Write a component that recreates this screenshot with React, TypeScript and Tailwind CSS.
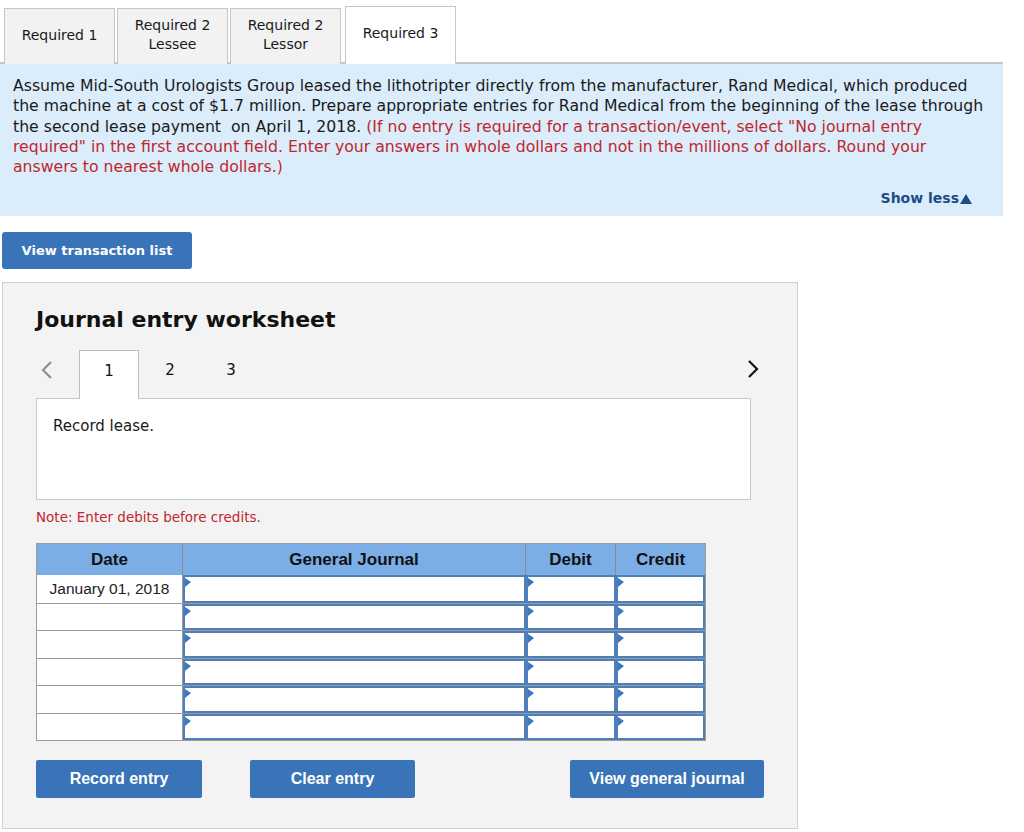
import React from "react";

const verdana = "font-['Verdana','DejaVu_Sans',sans-serif]";
const narrow = "font-['Liberation_Sans_Narrow','Liberation_Sans',sans-serif]";

const topTabs = [
  { label: ["Required 1"], active: false },
  { label: ["Required 2", "Lessee"], active: false },
  { label: ["Required 2", "Lessor"], active: false },
  { label: ["Required 3"], active: true },
];

function TopTabs() {
  return (
    <div className="flex items-end gap-[2px] pl-[4px] pt-[6px] border-b-2 border-[#c6c6c6] w-[1003px]">
      {topTabs.map((t, i) => (
        <div
          key={i}
          className={
            "w-[111px] h-[56px] -mb-[2px] pb-[3px] flex flex-col items-center justify-center text-[14px] leading-[19px] text-[#1a1a1a] border border-[#c6c6c6] " +
            (t.active ? "bg-white border-b-white ml-[2px] h-[58px]" : "bg-[#f2f2f2] border-b-0")
          }
        >
          {t.label.map((l) => (
            <span key={l}>{l}</span>
          ))}
        </div>
      ))}
    </div>
  );
}

function InputCell({ w }: { w: string }) {
  return (
    <div className={"relative h-full border-2 border-[#4f7fba] bg-white " + w}>
      <svg width="6" height="9" viewBox="0 0 6 9" className="absolute left-0 top-[1px]">
        <path d="M0 0 L6 4 L0 9 Z" fill="#3a78c2" />
      </svg>
    </div>
  );
}

function JournalTable() {
  const rows = ["January 01, 2018", "", "", "", "", ""];
  return (
    <div className="w-[670px] border border-[#9b9b9b] bg-white">
      <div className={"flex h-[31px] bg-[#7badE6] text-[17px] font-bold text-[#111] " + narrow}>
        <div className="w-[146px] flex items-center justify-center border-r border-[#8a8a8a]">Date</div>
        <div className="w-[343px] flex items-center justify-center border-r border-[#8a8a8a]">General Journal</div>
        <div className="w-[90px] flex items-center justify-center border-r border-[#8a8a8a]">Debit</div>
        <div className="flex-1 flex items-center justify-center">Credit</div>
      </div>
      {rows.map((d, i) => (
        <div key={i} className={"flex h-[27.5px] " + (i > 0 ? "border-t border-[#9b9b9b]" : "")}>
          <div className={"w-[146px] flex items-center justify-center text-[15.5px] text-[#222] border-r border-[#9b9b9b] " + narrow}>
            {d}
          </div>
          <InputCell w="w-[343px]" />
          <InputCell w="w-[90px]" />
          <InputCell w="flex-1" />
        </div>
      ))}
    </div>
  );
}

export default function App() {
  return (
    <div className={"w-[1024px] h-[832px] bg-white " + verdana}>
      <TopTabs />
      <div className="w-[1003px] h-[152px] bg-[#dbedfb] px-[13px] pt-[12px] relative">
        <p className="text-[15.7px] leading-[20.3px] text-[#1a1a1a] whitespace-nowrap">
          Assume Mid-South Urologists Group leased the lithotripter directly from the manufacturer, Rand Medical, which produced
          <br />
          the machine at a cost of $1.7 million. Prepare appropriate entries for Rand Medical from the beginning of the lease through
          <br />
          the second lease payment&nbsp; on April 1, 2018.{" "}
          <span className="text-[#c0262d]">
            (If no entry is required for a transaction/event, select "No journal entry
            <br />
            required" in the first account field. Enter your answers in whole dollars and not in the millions of dollars. Round your
            <br />
            answers to nearest whole dollars.)
          </span>
        </p>
        <div className="absolute right-[31px] top-[124px] text-[14px] font-bold text-[#1e4c86] flex items-center">
          Show less
          <svg width="12" height="10" viewBox="0 0 12 10" className="ml-[1px]">
            <path d="M0 10 L6 0 L12 10 Z" fill="#1e4c86" />
          </svg>
        </div>
      </div>

      <div className="pl-[2px] pt-[16px]">
        <button className="w-[190px] h-[37px] rounded-[3px] bg-[#3973b8] text-white text-[13px] font-bold">
          View transaction list
        </button>
      </div>

      <div className="ml-[2px] mt-[13px] w-[796px] h-[547px] bg-[#f3f3f3] border border-[#d2d2d2] pl-[33px] pt-[24px]">
        <h2 className="text-[22px] font-bold text-[#111] leading-[26px]">Journal entry worksheet</h2>

        <div className="mt-[17px] w-[715px] flex items-end relative">
          <div className="w-[43px] h-[48px] flex items-center justify-start pl-[5px] pb-[8px]">
            <svg width="12" height="18" viewBox="0 0 12 18">
              <path d="M10 1 L2 9 L10 17" stroke="#8f8f8f" strokeWidth="2.2" fill="none" />
            </svg>
          </div>
          <div className="w-[60px] h-[49px] -mb-[1px] bg-white border border-[#bdbdbd] border-b-0 flex items-center justify-center pb-[8px] text-[15px] text-[#111] relative z-10">
            1
          </div>
          <div className="w-[62px] h-[48px] flex items-center justify-center pb-[8px] text-[15px] text-[#111]">2</div>
          <div className="w-[60px] h-[48px] flex items-center justify-center pb-[8px] text-[15px] text-[#111]">3</div>
          <div className="absolute right-[-8px] top-[10px]">
            <svg width="12" height="18" viewBox="0 0 12 18">
              <path d="M2 1 L10 9 L2 17" stroke="#111" strokeWidth="2.2" fill="none" />
            </svg>
          </div>
        </div>
        <div className="w-[715px] h-[102px] bg-white border border-[#c8c8c8] pl-[16px] pt-[16px] text-[15px] text-[#1a1a1a]">
          Record lease.
        </div>

        <p className="mt-[7px] text-[13.5px] text-[#c0262d]">Note: Enter debits before credits.</p>

        <div className="mt-[16px]">
          <JournalTable />
        </div>

        <div className={"mt-[19px] flex text-white text-[16px] font-bold " + narrow}>
          <button className="w-[166px] h-[38px] rounded-[2px] bg-[#3973b8]">Record entry</button>
          <button className="ml-[48px] w-[165px] h-[38px] rounded-[2px] bg-[#3973b8]">Clear entry</button>
          <button className="ml-[155px] w-[194px] h-[38px] rounded-[2px] bg-[#3973b8]">View general journal</button>
        </div>
      </div>
    </div>
  );
}
